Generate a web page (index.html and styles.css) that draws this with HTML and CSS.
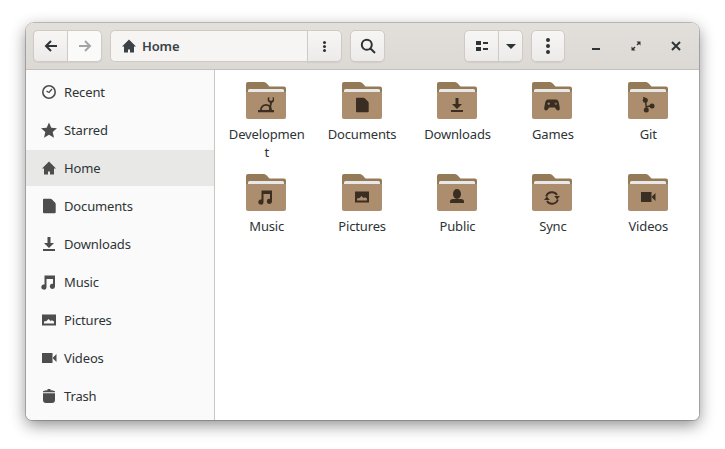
FILE: index.html
```html
<!DOCTYPE html>
<html lang="en">
<head>
    <meta charset="UTF-8">
    <meta name="viewport" content="width=device-width, initial-scale=1.0">
    <title>Home - Files</title>
    <link rel="stylesheet" href="styles.css">
</head>
<body>
    <svg class="defs" width="0" height="0">
        <symbol id="folder" viewBox="0 0 40 37">
            <path fill="#957a58" d="M2 0H17.5Q19 0 20.5 1.2L23.5 4.5H38A2 2 0 0 1 40 6.5V14H0V2A2 2 0 0 1 2 0Z"/>
            <path fill="#e8e8e8" d="M3.5 7H36.5A1.5 1.5 0 0 1 38 8.5V12H2V8.5A1.5 1.5 0 0 1 3.5 7Z"/>
            <path fill="#ac8d6d" d="M0 10H40V35A2 2 0 0 1 38 37H2A2 2 0 0 1 0 35Z"/>
        </symbol>
        <symbol id="i-recent" viewBox="0 0 16 16">
            <path fill="currentColor" fill-rule="evenodd" d="M8 1a7 7 0 1 1 0 14A7 7 0 0 1 8 1Zm0 1.6a5.4 5.4 0 1 0 0 10.8A5.4 5.4 0 0 0 8 2.6Z"/>
            <path fill="none" stroke="currentColor" stroke-width="1.3" d="M11 5 8 8.5 5.5 7.2"/>
        </symbol>
        <symbol id="i-star" viewBox="0 0 16 16">
            <path fill="currentColor" d="M8 .5 10.3 5.8 16 6.3 11.7 10.1 13 15.7 8 12.7 3 15.7 4.3 10.1 0 6.3 5.7 5.8Z"/>
        </symbol>
        <symbol id="i-home" viewBox="0 0 16 16">
            <path fill="currentColor" d="M8 1.5 15 8.5H13V14.5H9V11.5H7V14.5H3V8.5H1Z"/>
        </symbol>
        <symbol id="i-doc" viewBox="0 0 16 16">
            <path fill="currentColor" d="M3 .8H9.5Q10.3 .8 11 1.5L14 4.5Q14.7 5.2 14.7 6V14.2A1 1 0 0 1 13.7 15.2H3A1 1 0 0 1 2 14.2V1.8A1 1 0 0 1 3 .8Z"/>
        </symbol>
        <symbol id="i-down" viewBox="0 0 16 16">
            <path fill="currentColor" d="M6.5 1H9.5V7H13L8 12 3 7H6.5ZM2 13H14V15H2Z"/>
        </symbol>
        <symbol id="i-music" viewBox="0 0 16 16">
            <path fill="currentColor" d="M3.5 1.5H14V12.2A2.6 2.6 0 1 1 12 9.8V5H5.5V13A2.6 2.6 0 1 1 3.5 10.5Z"/>
        </symbol>
        <symbol id="i-pic" viewBox="0 0 16 16">
            <path fill="currentColor" fill-rule="evenodd" d="M1 2.5H15V13.5H1ZM3 11.5H13V9.500L11 8.200 9.500 9 7.500 7 5.500 9 3 9.500Z"/>
        </symbol>
        <symbol id="i-video" viewBox="0 0 16 16">
            <path fill="currentColor" d="M1 3H11.5V13H1ZM12 7.5 15.5 4V12L12 8.5Z"/>
        </symbol>
        <symbol id="i-trash" viewBox="0 0 16 16">
            <path fill="currentColor" d="M6.5 1H9.5V2.2Q12 2.4 14 3.2V4.2H2V3.2Q4 2.4 6.5 2.2ZM2 5.2H14V12Q14 15 11 15H5Q2 15 2 12Z"/>
        </symbol>
        <symbol id="i-dev" viewBox="0 0 16 16">
            <path fill="currentColor" fill-rule="evenodd" d="M0 13H16V15.3H0ZM2 13A6 6 0 0 1 14 13H12.3A4.3 4.3 0 0 0 3.7 13Z"/>
            <path fill="currentColor" d="M9.7 .8 11.3 0V3L13 4 14.7 3V0L16.3 .8V4L14 6 12.5 13H10.8L12 6 9.7 4Z"/>
        </symbol>
        <symbol id="i-games" viewBox="0 0 16 16">
            <path fill="currentColor" fill-rule="evenodd" d="M4 2.5H12Q14.3 2.5 15 6.5L15.8 11Q16 13.5 14 13.5 12.7 13.5 11.5 11.5L11 10.5H5L4.5 11.5Q3.3 13.5 2 13.5 0 13.5 .2 11L1 6.5Q1.7 2.5 4 2.5ZM4.3 5.5V6.3H3.5V7.2H4.3V8H5.2V7.2H6V6.3H5.2V5.5ZM11.5 5.5V6.3H12.3V5.5ZM10.7 6.3V7.2H11.5V6.3ZM12.3 6.3V7.2H13.1V6.3ZM11.5 7.2V8H12.3V7.2Z"/>
        </symbol>
        <symbol id="i-git" viewBox="0 0 16 16">
            <path fill="none" stroke="currentColor" stroke-width="1.5" d="M3.5 0 5.5 3 6.5 13M6 10 12 8.5"/>
            <circle fill="currentColor" cx="5.3" cy="3.2" r="2.5"/>
            <circle fill="currentColor" cx="6.3" cy="13" r="2.5"/>
            <circle fill="currentColor" cx="12" cy="9" r="2.5"/>
        </symbol>
        <symbol id="i-user" viewBox="0 0 16 16">
            <ellipse fill="currentColor" cx="8" cy="5" rx="4" ry="5"/>
            <path fill="currentColor" d="M1 14V12.5Q1 10 4 10H12Q15 10 15 12.5V14Z"/>
        </symbol>
        <symbol id="i-sync" viewBox="0 0 16 16">
            <path fill="none" stroke="currentColor" stroke-width="1.9" d="M2.200 7.500A6 6 0 0 1 13 6M13.800 10.500A6 6 0 0 1 3 12"/>
            <path fill="currentColor" d="M10.200 7H16L13.100 10.500ZM0 11H5.800L2.900 7.500Z"/>
        </symbol>
        <symbol id="i-search" viewBox="0 0 16 16">
            <path fill="none" stroke="currentColor" stroke-width="2" d="M6.800 1.800a5 5 0 1 0 0 10 5 5 0 0 0 0-10ZM10.500 10.500 15 15"/>
        </symbol>
        <symbol id="i-list" viewBox="0 0 16 16">
            <path fill="currentColor" d="M2 3H7V7H2ZM2 9H7V13H2ZM9 4H14V6H9ZM9 10H14V12H9Z"/>
        </symbol>
    </svg>

    <div class="window">
        <header class="headerbar">
            <div class="linked">
                <button class="btn back-btn">
                    <svg width="16" height="16" viewBox="0 0 16 16"><path fill="none" stroke="currentColor" stroke-width="2" d="M14 8H3M8 3 3 8 8 13"/></svg>
                </button>
                <button class="btn forward-btn">
                    <svg width="16" height="16" viewBox="0 0 16 16"><path fill="none" stroke="currentColor" stroke-width="2" d="M2 8H13M8 3 13 8 8 13"/></svg>
                </button>
            </div>
            <div class="linked pathbar">
                <div class="path-current">
                    <svg width="16" height="16"><use href="#i-home"/></svg>
                    <span>Home</span>
                </div>
                <button class="btn path-menu">
                    <span class="dots small"><i></i><i></i><i></i></span>
                </button>
            </div>
            <button class="btn search-btn">
                <svg width="16" height="16"><use href="#i-search"/></svg>
            </button>
            <div class="linked view-group">
                <button class="btn view-btn">
                    <svg width="16" height="16"><use href="#i-list"/></svg>
                </button>
                <button class="btn caret-btn"><span class="caret"></span></button>
            </div>
            <button class="btn menu-btn">
                <span class="dots"><i></i><i></i><i></i></span>
            </button>
            <div class="window-controls">
                <button class="ctl">
                    <svg width="16" height="16" viewBox="0 0 16 16"><path fill="currentColor" d="M4 10H12V12H4Z"/></svg>
                </button>
                <button class="ctl">
                    <svg width="16" height="16" viewBox="0 0 16 16"><path fill="currentColor" d="M8.500 3.500H12.500V7.500L11 6 9.500 7.500 8.500 6.500 10 5ZM7.500 12.500H3.500V8.500L5 10 6.500 8.500 7.500 9.500 6 11Z"/></svg>
                </button>
                <button class="ctl">
                    <svg width="16" height="16" viewBox="0 0 16 16"><path fill="none" stroke="currentColor" stroke-width="2" d="M4 4 12 12M12 4 4 12"/></svg>
                </button>
            </div>
        </header>
        <div class="content">
            <nav class="sidebar">
                <a class="place"><svg width="16" height="16"><use href="#i-recent"/></svg>Recent</a>
                <a class="place"><svg width="16" height="16"><use href="#i-star"/></svg>Starred</a>
                <a class="place active"><svg width="16" height="16"><use href="#i-home"/></svg>Home</a>
                <a class="place"><svg width="16" height="16"><use href="#i-doc"/></svg>Documents</a>
                <a class="place"><svg width="16" height="16"><use href="#i-down"/></svg>Downloads</a>
                <a class="place"><svg width="16" height="16"><use href="#i-music"/></svg>Music</a>
                <a class="place"><svg width="16" height="16"><use href="#i-pic"/></svg>Pictures</a>
                <a class="place"><svg width="16" height="16"><use href="#i-video"/></svg>Videos</a>
                <a class="place"><svg width="16" height="16"><use href="#i-trash"/></svg>Trash</a>
            </nav>
            <main class="files">
                <div class="file">
                    <svg class="folder" width="40" height="37" viewBox="0 0 40 37"><use href="#folder" width="40" height="37"/><use href="#i-dev" x="12" y="15" width="16" height="16"/></svg>
                    <span class="name">Developmen<br>t</span>
                </div>
                <div class="file">
                    <svg class="folder" width="40" height="37" viewBox="0 0 40 37"><use href="#folder" width="40" height="37"/><use href="#i-doc" x="12" y="15" width="16" height="16"/></svg>
                    <span class="name">Documents</span>
                </div>
                <div class="file">
                    <svg class="folder" width="40" height="37" viewBox="0 0 40 37"><use href="#folder" width="40" height="37"/><use href="#i-down" x="12" y="15" width="16" height="16"/></svg>
                    <span class="name">Downloads</span>
                </div>
                <div class="file">
                    <svg class="folder" width="40" height="37" viewBox="0 0 40 37"><use href="#folder" width="40" height="37"/><use href="#i-games" x="12" y="15" width="16" height="16"/></svg>
                    <span class="name">Games</span>
                </div>
                <div class="file">
                    <svg class="folder" width="40" height="37" viewBox="0 0 40 37"><use href="#folder" width="40" height="37"/><use href="#i-git" x="12" y="15" width="16" height="16"/></svg>
                    <span class="name">Git</span>
                </div>
                <div class="file">
                    <svg class="folder" width="40" height="37" viewBox="0 0 40 37"><use href="#folder" width="40" height="37"/><use href="#i-music" x="12" y="15" width="16" height="16"/></svg>
                    <span class="name">Music</span>
                </div>
                <div class="file">
                    <svg class="folder" width="40" height="37" viewBox="0 0 40 37"><use href="#folder" width="40" height="37"/><use href="#i-pic" x="12" y="15" width="16" height="16"/></svg>
                    <span class="name">Pictures</span>
                </div>
                <div class="file">
                    <svg class="folder" width="40" height="37" viewBox="0 0 40 37"><use href="#folder" width="40" height="37"/><use href="#i-user" x="12" y="15" width="16" height="16"/></svg>
                    <span class="name">Public</span>
                </div>
                <div class="file">
                    <svg class="folder" width="40" height="37" viewBox="0 0 40 37"><use href="#folder" width="40" height="37"/><use href="#i-sync" x="12" y="15" width="16" height="16"/></svg>
                    <span class="name">Sync</span>
                </div>
                <div class="file">
                    <svg class="folder" width="40" height="37" viewBox="0 0 40 37"><use href="#folder" width="40" height="37"/><use href="#i-video" x="12" y="15" width="16" height="16"/></svg>
                    <span class="name">Videos</span>
                </div>
            </main>
        </div>
    </div>
</body>
</html>
```

FILE: styles.css
```css
html, body {
    margin: 0;
    padding: 0;
    height: 100%;
    background: #fff;
    overflow: hidden;
}
body {
    font-family: "Noto Sans", sans-serif;
    font-size: 13px;
    letter-spacing: -0.15px;
    color: #2e3436;
    padding: 23px 26px;
    box-sizing: border-box;
}
.defs {
    display: block;
}
.window {
    width: 673px;
    height: 397px;
    border-radius: 8px 8px 6px 6px;
    overflow: hidden;
    display: flex;
    flex-direction: column;
    box-shadow: 0 0 0 1px rgba(0, 0, 0, 0.2), 0 5px 16px rgba(0, 0, 0, 0.45);
}
.headerbar {
    height: 47px;
    flex: none;
    padding: 7px;
    box-sizing: border-box;
    display: flex;
    align-items: stretch;
    gap: 8px;
    background: linear-gradient(to bottom, #e3e0dc, #dcd9d5);
    border-bottom: 1px solid #c6c1bb;
}
.linked {
    display: flex;
}
.btn {
    height: 32px;
    padding: 0;
    margin: 0;
    display: flex;
    align-items: center;
    justify-content: center;
    color: #2e3436;
    background: linear-gradient(to bottom, #f7f6f5, #edebe9);
    border: 1px solid #cfcac5;
    border-radius: 5px;
    box-shadow: 0 1px 1px rgba(0, 0, 0, 0.06);
}
.linked .btn:first-child {
    border-radius: 5px 0 0 5px;
    border-right: none;
}
.linked .btn:last-child {
    border-radius: 0 5px 5px 0;
}
.back-btn {
    width: 34px;
}
.forward-btn {
    width: 35px;
    background: #fafaf9;
    color: #a2a5a5;
}
.pathbar {
    width: 232px;
}
.path-current {
    flex: 1;
    display: flex;
    align-items: center;
    gap: 5px;
    padding-left: 10px;
    height: 32px;
    box-sizing: border-box;
    background: #f6f5f4;
    border: 1px solid #cfcac5;
    border-right: none;
    border-radius: 5px 0 0 5px;
    font-weight: 600;
    color: #3a4246;
}
.path-current svg {
    flex: none;
}
.path-menu {
    width: 35px;
}
.search-btn {
    width: 35px;
}
.view-group {
    margin-left: auto;
}
.view-btn {
    width: 34px;
}
.caret-btn {
    width: 25px;
}
.caret {
    width: 0;
    height: 0;
    border-left: 5px solid transparent;
    border-right: 5px solid transparent;
    border-top: 5px solid #2e3436;
}
.menu-btn {
    width: 34px;
}
.dots {
    display: flex;
    flex-direction: column;
    gap: 2px;
}
.dots i {
    display: block;
    width: 4px;
    height: 4px;
    border-radius: 50%;
    background: #2e3436;
}
.dots.small {
    gap: 1px;
}
.dots.small i {
    width: 3px;
    height: 3px;
}
.window-controls {
    display: flex;
    gap: 6px;
    margin-left: 6px;
    margin-right: -1px;
}
.ctl {
    width: 34px;
    height: 32px;
    padding: 0;
    border: none;
    background: none;
    color: #2e3436;
    display: flex;
    align-items: center;
    justify-content: center;
}
.content {
    flex: 1;
    display: flex;
    min-height: 0;
}
.sidebar {
    width: 188px;
    flex: none;
    background: #fafafa;
    border-right: 1px solid #c9c5c0;
    padding-top: 4px;
    display: flex;
    flex-direction: column;
    gap: 2px;
}
.place {
    height: 36px;
    flex: none;
    padding-left: 15px;
    display: flex;
    align-items: center;
    gap: 7px;
}
.place svg {
    flex: none;
    color: #4d4d4d;
}
.place.active {
    background: #e8e8e6;
}
.files {
    flex: 1;
    background: #fff;
    padding: 12px 3.5px 0;
    display: grid;
    grid-template-columns: repeat(5, 1fr);
    grid-auto-rows: 92px;
}
.file {
    display: flex;
    flex-direction: column;
    align-items: center;
    text-align: center;
    gap: 6px;
}
.folder {
    flex: none;
    color: #3a2e22;
}
.name {
    line-height: 18px;
    padding-left: 1px;
}
```
